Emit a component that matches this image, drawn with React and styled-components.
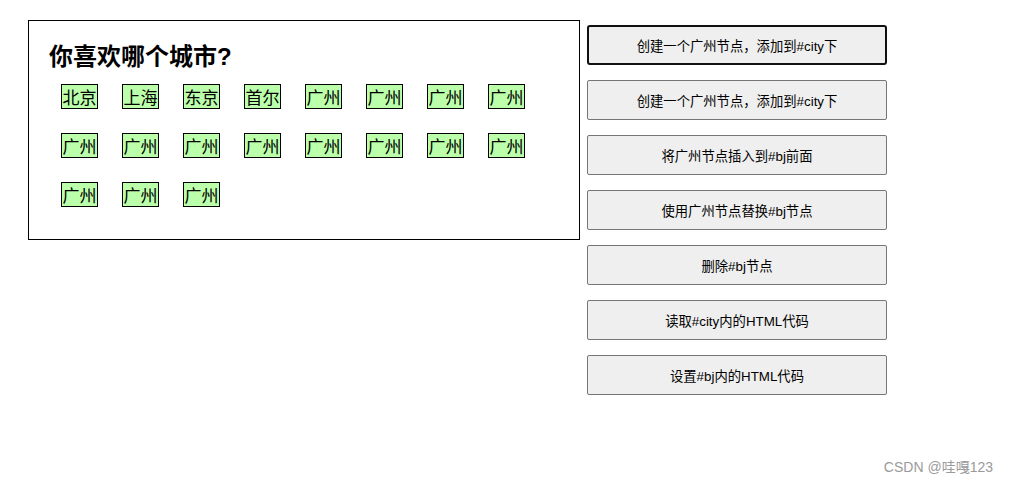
import React from "react";
import styled, { createGlobalStyle } from "styled-components";

const GlobalStyle = createGlobalStyle`
  body {
    margin: 0;
    background: #fff;
    font-family: "Liberation Sans", "Noto Sans CJK SC", sans-serif;
  }
`;

const Page = styled.div`
  position: relative;
  height: 483px;
  display: flex;
  align-items: flex-start;
  gap: 7px;
  padding: 20px 0 0 28px;
  box-sizing: border-box;
`;

const Total = styled.div`
  width: 552px;
  height: 220px;
  box-sizing: border-box;
  border: 1px solid #000;
  padding: 21px 20px 0 20px;
`;

const Title = styled.p`
  margin: 0;
  font-size: 24px;
  line-height: 30px;
  font-weight: bold;
  color: #000;
  font-family: "Liberation Sans", "Noto Sans CJK SC", sans-serif;
`;

const CityList = styled.ul`
  list-style: none;
  margin: 12px 0 0 0;
  padding: 0 12px;
  display: flex;
  flex-wrap: wrap;
  column-gap: 24px;
  row-gap: 24px;
  width: 464px;
`;

const City = styled.li`
  width: 35px;
  height: 23px;
  line-height: 23px;
  border: 1px solid #000;
  background: #bbffaa;
  font-size: 17px;
  text-align: center;
  white-space: nowrap;
  color: #000;
  font-family: "Noto Sans CJK SC", sans-serif;
`;

const BtnColumn = styled.div`
  display: flex;
  flex-direction: column;
  gap: 15px;
  padding-top: 5px;
`;

const Btn = styled.button`
  width: 300px;
  height: 40px;
  box-sizing: border-box;
  background: #efefef;
  border: ${(p) => (p.$focused ? "2px solid #101010" : "1px solid #767676")};
  border-radius: ${(p) => (p.$focused ? "3px" : "2px")};
  font-size: 13.333px;
  color: #000;
  font-family: "Liberation Sans", "Noto Sans CJK SC", sans-serif;
  padding: 0;
  cursor: pointer;
`;

const Watermark = styled.div`
  position: absolute;
  right: 16px;
  bottom: 7px;
  font-size: 14px;
  color: #9a9a9a;
  font-family: "Liberation Sans", "Noto Sans CJK SC", sans-serif;
`;

const cities = ["北京", "上海", "东京", "首尔", ...Array(15).fill("广州")];

const buttons = [
  "创建一个广州节点，添加到#city下",
  "创建一个广州节点，添加到#city下",
  "将广州节点插入到#bj前面",
  "使用广州节点替换#bj节点",
  "删除#bj节点",
  "读取#city内的HTML代码",
  "设置#bj内的HTML代码",
];

export default function App() {
  return (
    <>
      <GlobalStyle />
      <Page>
        <Total>
          <Title>你喜欢哪个城市?</Title>
          <CityList>
            {cities.map((c, i) => (
              <City key={i}>{c}</City>
            ))}
          </CityList>
        </Total>
        <BtnColumn>
          {buttons.map((b, i) => (
            <Btn key={i} $focused={i === 0}>
              {b}
            </Btn>
          ))}
        </BtnColumn>
        <Watermark>CSDN @哇嘎123</Watermark>
      </Page>
    </>
  );
}
